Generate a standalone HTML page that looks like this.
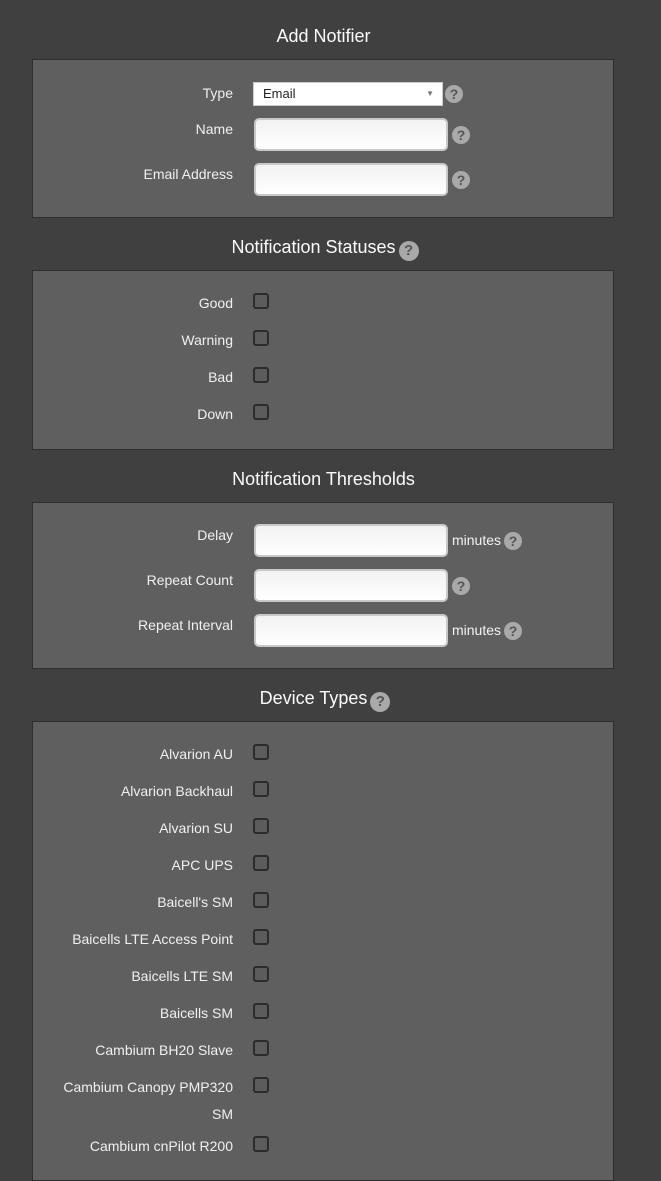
<!DOCTYPE html>
<html><head><meta charset="utf-8"><style>
*{box-sizing:border-box;margin:0;padding:0}
body{width:661px;height:1164px;background:#404040;position:relative;overflow:hidden;font-family:"Liberation Sans",Arial,sans-serif;color:#f2f2f2}
.t{position:absolute;left:0;width:647px;text-align:center;font-size:18px;line-height:22px;color:#fafafa}
.p{position:absolute;left:32px;width:582px;background:#5f5f5f;border:1px solid #2e2e2e}
.l{position:absolute;right:428px;width:180px;text-align:right;font-size:14px;line-height:27px;color:#f0f0f0}
.i{position:absolute;left:254px;width:194px;height:33px;background:linear-gradient(#f2f2f2,#fff);border:2px solid #c8c8c8;border-radius:5px}
.c{position:absolute;left:253px;width:16px;height:16px;border:2px solid #2c2c2c;border-radius:3px;background:#5c5c5c}
.h{position:absolute;width:18px;height:18px;border-radius:50%;background:#a9a9a9;color:#555;font-weight:bold;font-size:14px;line-height:18px;text-align:center}
.m{position:absolute;left:452px;font-size:14px;line-height:18px}
</style></head><body>
<div class="t" style="top:25px">Add Notifier</div>
<div class="p" style="top:59px;height:159px"></div>
<div class="l" style="top:80px">Type</div>
<div style="position:absolute;left:253px;top:82px;width:190px;height:24px;background:#fff;border:1px solid #ccc;font-size:13px;line-height:22px;padding-left:9px;color:#222">Email<span style="position:absolute;right:8px;top:0;font-size:8px;color:#777">▼</span></div>
<div class="h" style="left:445px;top:85px">?</div>
<div class="l" style="top:116px">Name</div>
<div class="i" style="top:118px"></div>
<div class="h" style="left:452px;top:126px">?</div>
<div class="l" style="top:161px">Email Address</div>
<div class="i" style="top:163px"></div>
<div class="h" style="left:452px;top:171px">?</div>

<div class="t" style="top:236px">Notification Statuses<span class="h" style="position:relative;display:inline-block;width:20px;height:20px;line-height:20px;top:2px;left:3px;font-size:15px">?</span></div>
<div class="p" style="top:270px;height:180px"></div>
<div class="l" style="top:290px">Good</div><div class="c" style="top:293px"></div>
<div class="l" style="top:327px">Warning</div><div class="c" style="top:330px"></div>
<div class="l" style="top:364px">Bad</div><div class="c" style="top:367px"></div>
<div class="l" style="top:401px">Down</div><div class="c" style="top:404px"></div>

<div class="t" style="top:468px">Notification Thresholds</div>
<div class="p" style="top:502px;height:167px"></div>
<div class="l" style="top:522px">Delay</div>
<div class="i" style="top:524px"></div>
<div class="m" style="top:531px">minutes</div><div class="h" style="left:504px;top:532px">?</div>
<div class="l" style="top:567px">Repeat Count</div>
<div class="i" style="top:569px"></div>
<div class="h" style="left:452px;top:577px">?</div>
<div class="l" style="top:612px">Repeat Interval</div>
<div class="i" style="top:614px"></div>
<div class="m" style="top:621px">minutes</div><div class="h" style="left:504px;top:622px">?</div>

<div class="t" style="top:687px">Device Types<span class="h" style="position:relative;display:inline-block;width:20px;height:20px;line-height:20px;top:2px;left:3px;font-size:15px">?</span></div>
<div class="p" style="top:721px;height:460px"></div>
<div class="l" style="top:741px">Alvarion AU</div><div class="c" style="top:744px"></div>
<div class="l" style="top:778px">Alvarion Backhaul</div><div class="c" style="top:781px"></div>
<div class="l" style="top:815px">Alvarion SU</div><div class="c" style="top:818px"></div>
<div class="l" style="top:852px">APC UPS</div><div class="c" style="top:855px"></div>
<div class="l" style="top:889px">Baicell's SM</div><div class="c" style="top:892px"></div>
<div class="l" style="top:926px">Baicells LTE Access Point</div><div class="c" style="top:929px"></div>
<div class="l" style="top:963px">Baicells LTE SM</div><div class="c" style="top:966px"></div>
<div class="l" style="top:1000px">Baicells SM</div><div class="c" style="top:1003px"></div>
<div class="l" style="top:1037px">Cambium BH20 Slave</div><div class="c" style="top:1040px"></div>
<div class="l" style="top:1074px">Cambium Canopy PMP320 SM</div><div class="c" style="top:1077px"></div>
<div class="l" style="top:1133px">Cambium cnPilot R200</div><div class="c" style="top:1136px"></div>
</body></html>
